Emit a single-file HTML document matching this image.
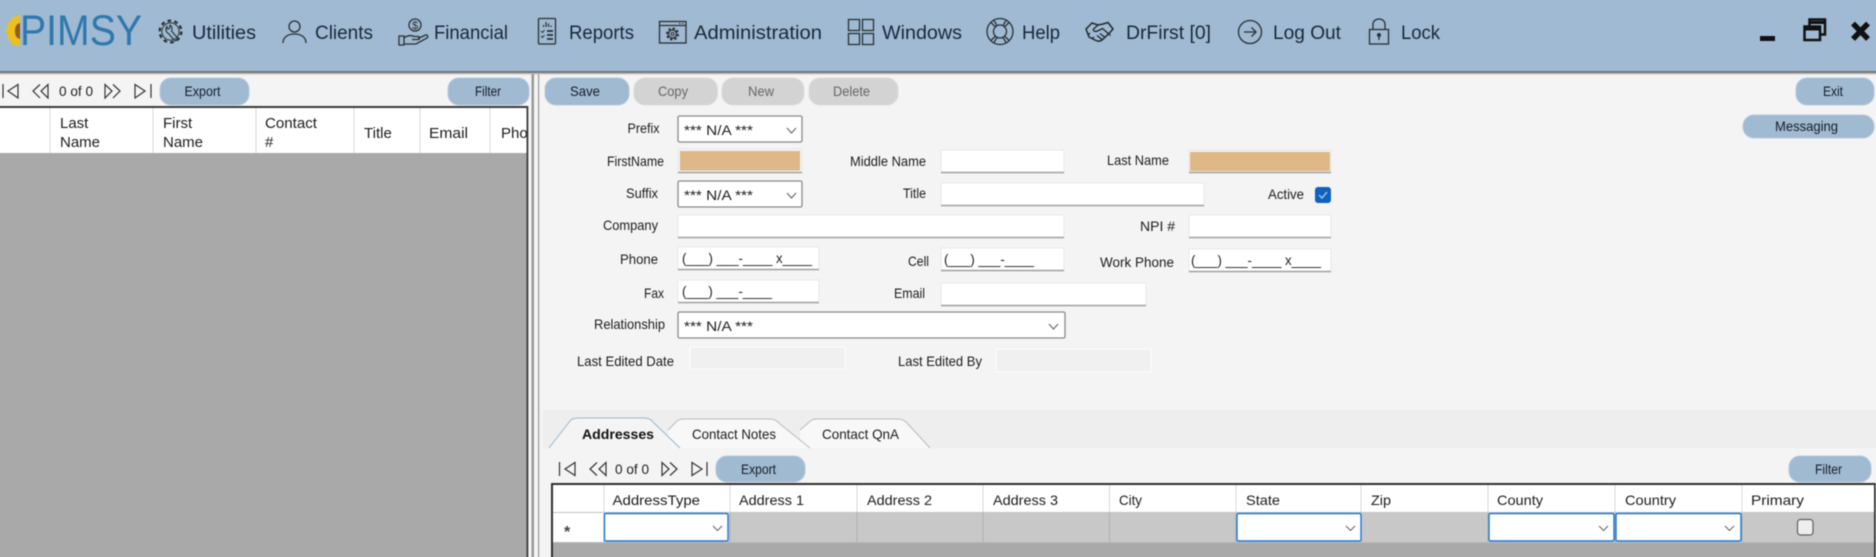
<!DOCTYPE html>
<html><head><meta charset="utf-8"><title>PIMSY</title>
<style>
html,body{margin:0;padding:0;background:#f4f4f4;width:1876px;height:557px;overflow:hidden}
svg{display:block;margin:-10px 0 0 -10px;filter:blur(.45px)}
text{font-family:"Liberation Sans",sans-serif;fill:#1c1c1c;font-size:14px}
.m{font-size:19px;fill:#1a2838}
.b{font-size:14px;fill:#151d28}
.d{font-size:14px;fill:#666}
.h{font-size:15px;fill:#1c1c1c}
.i{fill:none;stroke:#2b2f33;stroke-width:1.3}
.n{fill:none;stroke:#333;stroke-width:1.2}
.btn{fill:#a0bad2;stroke:#b4c8dc;stroke-width:1}
.dis{fill:#d3d3d3;stroke:#dcdcdc;stroke-width:1}
.f{fill:#fff;stroke:#e9e9e9;stroke-width:1}
.u{stroke:#a2a2a2;stroke-width:1.5}
.s{fill:#fff;stroke:#8a8a8a;stroke-width:1.3}
.c{fill:none;stroke:#666;stroke-width:1.1}
.e{fill:#f0f0f0;stroke:#fafafa;stroke-width:1.5}
.g{stroke:#d8d8d8;stroke-width:1}
.k{fill:#fff;stroke:#1e78d2;stroke-width:1.4}
.r{stroke:#b0b0b0;stroke-width:1}
</style></head><body>
<svg xmlns="http://www.w3.org/2000/svg" width="1896" height="577" viewBox="-10 -10 1896 577">
<defs><clipPath id="ph"><rect x="490" y="108" width="36.5" height="45"/></clipPath></defs>
<rect x="-10" y="-10" width="1896" height="577" fill="#f4f4f4"/>
<!-- top bar -->
<rect x="-10" y="-10" width="1896" height="81" fill="#9fbad2"/>
<rect x="-10" y="71" width="1896" height="2" fill="#777"/>
<rect x="-10" y="73" width="1896" height="1.5" fill="#c4c4c4"/>
<!-- logo -->
<path d="M20 14 L16 17 L12 17 L11 21 L7 23 L8 27 L5 31 L8 35 L7 39 L11 41 L12 45 L16 45 L20 47 Z" fill="#ecc01f"/>
<path d="M20 23 C16 24 15 27 15 31 C15 35 16 38 20 39 Z" fill="#8f5f22"/>
<text x="20" y="45" textLength="122" lengthAdjust="spacingAndGlyphs" style="font-size:43px;fill:#2f78ad">PIMSY</text>
<!-- menu labels -->
<text class="m" x="192" y="39" textLength="64" lengthAdjust="spacingAndGlyphs">Utilities</text>
<text class="m" x="315" y="39" textLength="58" lengthAdjust="spacingAndGlyphs">Clients</text>
<text class="m" x="434" y="39" textLength="74" lengthAdjust="spacingAndGlyphs">Financial</text>
<text class="m" x="569" y="39" textLength="65" lengthAdjust="spacingAndGlyphs">Reports</text>
<text class="m" x="694" y="39" textLength="128" lengthAdjust="spacingAndGlyphs">Administration</text>
<text class="m" x="882" y="39" textLength="80" lengthAdjust="spacingAndGlyphs">Windows</text>
<text class="m" x="1022" y="39" textLength="38" lengthAdjust="spacingAndGlyphs">Help</text>
<text class="m" x="1126" y="39" textLength="85" lengthAdjust="spacingAndGlyphs">DrFirst [0]</text>
<text class="m" x="1273" y="39" textLength="68" lengthAdjust="spacingAndGlyphs">Log Out</text>
<text class="m" x="1401" y="39" textLength="39" lengthAdjust="spacingAndGlyphs">Lock</text>
<!-- utilities gear -->
<circle cx="170.5" cy="31.5" r="8.6" fill="none" stroke="#2b2f33" stroke-width="1"/>
<circle cx="170.5" cy="31.5" r="10.8" fill="none" stroke="#2b2f33" stroke-width="2.4" stroke-dasharray="3.6 3.2"/>
<path fill="none" stroke="#2b2f33" stroke-width="1.1" d="M167 26.500a4.500 4.500 0 0 0 1.500 7l6.500 7.500 3-2.500-6.500-7.500a4.500 4.500 0 0 0-1.500-6l-.5 3.500-2 .5z"/>
<!-- clients -->
<circle class="i" cx="294.5" cy="26.5" r="5.5"/>
<path class="i" d="M283 43c0-6 5-9 11.500-9s11.500 3 11.500 9"/>
<!-- financial -->
<circle class="i" cx="415" cy="25" r="6"/>
<text x="412" y="29" style="font-size:11px;fill:#2b2f33">$</text>
<path class="i" d="M399 36h5v9h-5zM404 38c4-3 7-3 10-1.500h4c2 0 2 3 0 3h-6M418 38.500l7.500-3.500c2-.5 3 1.500 1.500 3l-11 6h-12"/>
<!-- reports -->
<rect class="i" x="538.500" y="18.500" width="17" height="25.500" rx="1"/>
<path d="M543.500 27v-2M546 27v-5M548.500 27v-3.500M551 27v-1.500" stroke="#2b2f33" stroke-width="1.200"/>
<path d="M547 31h6M547 35h6M547 39h6" stroke="#2b2f33" stroke-width="1.800"/>
<path d="M541 31l1.500 1.500 2-2.500M541 36l1.500 1.500 2-2.500" fill="none" stroke="#2b2f33" stroke-width="1"/>
<!-- admin -->
<rect class="i" x="659.500" y="21.500" width="26.500" height="21.500"/>
<path d="M659.500 25.500h26.500" stroke="#2b2f33" stroke-width="1.200"/>
<path d="M679 23.500h1.500M682 23.500h1.500" stroke="#2b2f33" stroke-width="1"/>
<circle class="i" cx="672.500" cy="34" r="4"/>
<circle cx="672.500" cy="34" r="5.500" fill="none" stroke="#2b2f33" stroke-width="2" stroke-dasharray="2.400 1.900"/>
<circle cx="672.500" cy="34" r="1.500" fill="none" stroke="#2b2f33"/>
<!-- windows -->
<rect class="i" x="848.500" y="19.500" width="11" height="11"/>
<rect class="i" x="862.500" y="19.500" width="11" height="11"/>
<rect class="i" x="848.500" y="33.500" width="11" height="11"/>
<rect class="i" x="862.500" y="33.500" width="11" height="11"/>
<!-- help -->
<circle class="i" cx="1000" cy="31.500" r="13"/>
<circle class="i" cx="1000" cy="31.500" r="6.500"/>
<path class="i" d="M991 22.500l4.500 4.500M1009 22.500l-4.500 4.500M991 40.500l4.500-4.500M1009 40.500l-4.500-4.500M994 20.500l3 5M1006 20.500l-3 5M994 42.500l3-5M1006 42.500l-3-5"/>
<!-- handshake -->
<path fill="none" stroke="#23272b" stroke-width="1.500" d="M1086 29l6-6 6 2 5-1 5-1.500 5 6.500-3 3.500-8 7.500c-2 1.500-4 1.500-6 .5l-7-3.500-3-8z"/>
<path fill="none" stroke="#23272b" stroke-width="1.300" d="M1098 25l-4.500 4c-1 2 2 3 4 2l5-2.500 8 7M1102 39.500l-5-4M1105 37.500l-5-4M1090 33l-2 2M1094 37l-2 2"/>
<!-- logout -->
<circle class="i" cx="1250" cy="32" r="11.500"/>
<path class="i" d="M1244 32h12M1251.500 27.500l4.500 4.500-4.500 4.500"/>
<!-- lock -->
<rect class="i" x="1369.500" y="29.500" width="19" height="14.500"/>
<path class="i" d="M1373 29v-5a6 5 0 0 1 12 0v5"/>
<circle cx="1379" cy="35" r="2" fill="#2b2f33"/><path d="M1379 35v5" stroke="#2b2f33" stroke-width="1.300"/>
<!-- window controls -->
<rect x="1760" y="36" width="15" height="5" fill="#111"/>
<rect x="1809.500" y="19.500" width="15.500" height="15" fill="none" stroke="#111" stroke-width="2.500"/>
<path d="M1809 22.500h16" stroke="#111" stroke-width="3"/>
<rect x="1804.500" y="26.500" width="15.500" height="13.500" fill="#9fbad2" stroke="#111" stroke-width="2.500"/>
<path d="M1804 29h16" stroke="#111" stroke-width="3"/>
<path d="M1853 23.500l15 15.500M1868 23.500l-15 15.500" stroke="#111" stroke-width="5.500"/>

<!-- left toolbar -->
<path class="n" d="M3 84v14M18 84.500v13.500l-10-7z"/>
<path class="n" d="M40 84.500l-7 6.500 7 7M48 84.500v13.500l-7-7z"/>
<text x="59" y="96" textLength="34" lengthAdjust="spacingAndGlyphs">0 of 0</text>
<path class="n" d="M105 84.500v13.500l7-7zM113 84.500l7 6.500-7 7"/>
<path class="n" d="M135 84.500v13.500l10-7zM151 84v14"/>
<rect class="btn" x="160" y="78" width="89" height="27" rx="11"/>
<text class="b" x="184.500" y="96" textLength="36" lengthAdjust="spacingAndGlyphs">Export</text>
<rect class="btn" x="448" y="78" width="81" height="27" rx="11"/>
<text class="b" x="475" y="96" textLength="26" lengthAdjust="spacingAndGlyphs">Filter</text>
<!-- left grid -->
<rect x="-10" y="106" width="538" height="461" fill="#a9a9a9"/>
<rect x="-10" y="108" width="536.500" height="45" fill="#fff"/>
<rect x="-10" y="106" width="538" height="2" fill="#3a3a3a"/>
<rect x="526.500" y="106" width="1.800" height="461" fill="#3a3a3a"/>
<path class="g" d="M50 108v45M153 108v45M256 108v45M354 108v45M420 108v45M490 108v45"/>
<text class="h" x="60" y="128">Last</text><text class="h" x="60" y="147">Name</text>
<text class="h" x="163" y="128">First</text><text class="h" x="163" y="147">Name</text>
<text class="h" x="265" y="128" textLength="52" lengthAdjust="spacingAndGlyphs">Contact</text><text class="h" x="265" y="147">#</text>
<text class="h" x="364" y="138">Title</text>
<text class="h" x="429" y="138" textLength="39" lengthAdjust="spacingAndGlyphs">Email</text>
<g clip-path="url(#ph)"><text class="h" x="501" y="138">Phone</text></g>
<!-- splitter -->
<rect x="531.500" y="74" width="2.500" height="493" fill="#999"/>
<rect x="538" y="74" width="1.200" height="493" fill="#999"/>
<!-- right toolbar -->
<rect class="btn" x="545" y="78" width="84" height="27" rx="11"/>
<text class="b" x="570" y="96" textLength="30" lengthAdjust="spacingAndGlyphs">Save</text>
<rect class="dis" x="634" y="78" width="83.500" height="27" rx="11"/>
<text class="d" x="658" y="96" textLength="30" lengthAdjust="spacingAndGlyphs">Copy</text>
<rect class="dis" x="722" y="78" width="82" height="27" rx="11"/>
<text class="d" x="748" y="96" textLength="26" lengthAdjust="spacingAndGlyphs">New</text>
<rect class="dis" x="809" y="78" width="89" height="27" rx="11"/>
<text class="d" x="833" y="96" textLength="37" lengthAdjust="spacingAndGlyphs">Delete</text>
<rect class="btn" x="1796" y="78" width="78" height="27" rx="11"/>
<text class="b" x="1823" y="96" textLength="20" lengthAdjust="spacingAndGlyphs">Exit</text>
<rect class="btn" x="1743" y="115" width="131" height="23" rx="11"/>
<text class="b" x="1775" y="131" textLength="63" lengthAdjust="spacingAndGlyphs">Messaging</text>
<!-- form labels -->
<text x="627.500" y="133" textLength="32" lengthAdjust="spacingAndGlyphs">Prefix</text>
<text x="607" y="166" textLength="57" lengthAdjust="spacingAndGlyphs">FirstName</text>
<text x="850" y="166" textLength="76" lengthAdjust="spacingAndGlyphs">Middle Name</text>
<text x="1107" y="165" textLength="62" lengthAdjust="spacingAndGlyphs">Last Name</text>
<text x="626" y="198" textLength="32" lengthAdjust="spacingAndGlyphs">Suffix</text>
<text x="903" y="198" textLength="23" lengthAdjust="spacingAndGlyphs">Title</text>
<text x="1268" y="199" textLength="36" lengthAdjust="spacingAndGlyphs">Active</text>
<text x="603" y="230" textLength="55" lengthAdjust="spacingAndGlyphs">Company</text>
<text x="1140" y="231" textLength="35" lengthAdjust="spacingAndGlyphs">NPI #</text>
<text x="620" y="264" textLength="38" lengthAdjust="spacingAndGlyphs">Phone</text>
<text x="908" y="266" textLength="21" lengthAdjust="spacingAndGlyphs">Cell</text>
<text x="1100" y="267" textLength="74" lengthAdjust="spacingAndGlyphs">Work Phone</text>
<text x="644" y="298" textLength="20" lengthAdjust="spacingAndGlyphs">Fax</text>
<text x="894" y="298" textLength="31" lengthAdjust="spacingAndGlyphs">Email</text>
<text x="594" y="329" textLength="71" lengthAdjust="spacingAndGlyphs">Relationship</text>
<text x="577" y="366" textLength="97" lengthAdjust="spacingAndGlyphs">Last Edited Date</text>
<text x="898" y="366" textLength="84" lengthAdjust="spacingAndGlyphs">Last Edited By</text>
<!-- selects -->
<rect class="s" x="678" y="116" width="124" height="26" rx="1.500"/>
<text x="684" y="135" textLength="69" lengthAdjust="spacingAndGlyphs">*** N/A ***</text>
<path class="c" d="M787 128l4.500 5 4.500-5"/>
<rect class="s" x="678" y="181" width="124" height="26" rx="1.500"/>
<text x="684" y="200" textLength="69" lengthAdjust="spacingAndGlyphs">*** N/A ***</text>
<path class="c" d="M787 193l4.500 5 4.500-5"/>
<rect class="s" x="678" y="312" width="387" height="26" rx="1.500"/>
<text x="684" y="331" textLength="69" lengthAdjust="spacingAndGlyphs">*** N/A ***</text>
<path class="c" d="M1049 324l4.500 5 4.500-5"/>
<!-- fields -->
<rect class="f" x="678" y="149" width="124" height="24" style="fill:#f2f2f2"/>
<rect x="680" y="151" width="120" height="19.500" fill="#deb887"/>
<path class="u" d="M678 172.500h124"/>
<rect class="f" x="941" y="150" width="123" height="23"/><path class="u" d="M941 172.500h123"/>
<rect class="f" x="1189" y="150" width="142" height="23" style="fill:#f2f2f2"/>
<rect x="1190" y="152" width="140" height="19" fill="#deb887"/>
<path class="u" d="M1189 172.500h142"/>
<rect class="f" x="941" y="183" width="263" height="23"/><path class="u" d="M941 205.500h263"/>
<rect x="1315" y="187" width="16" height="16" rx="3" fill="#0f62be"/>
<path d="M1319 195l3 3 5-6" fill="none" stroke="#bcd6f2" stroke-width="1.200"/>
<rect class="f" x="678" y="215" width="386" height="23"/><path class="u" d="M678 237.500h386"/>
<rect class="f" x="1189" y="215" width="142" height="23"/><path class="u" d="M1189 237.500h142"/>
<rect class="f" x="678" y="247" width="141" height="23"/><path class="u" d="M678 269.500h141"/>
<text x="682" y="263" textLength="130" lengthAdjust="spacingAndGlyphs">(___) ___-____ x____</text>
<rect class="f" x="941" y="248" width="123" height="23"/><path class="u" d="M941 270.500h123"/>
<text x="944" y="264" textLength="90" lengthAdjust="spacingAndGlyphs">(___) ___-____</text>
<rect class="f" x="1189" y="249" width="142" height="23"/><path class="u" d="M1189 271.500h142"/>
<text x="1191" y="265" textLength="130" lengthAdjust="spacingAndGlyphs">(___) ___-____ x____</text>
<rect class="f" x="678" y="280" width="141" height="23"/><path class="u" d="M678 302.500h141"/>
<text x="682" y="296" textLength="90" lengthAdjust="spacingAndGlyphs">(___) ___-____</text>
<rect class="f" x="941" y="283" width="205" height="23"/><path class="u" d="M941 305.500h205"/>
<rect class="e" x="690" y="347" width="155" height="22"/>
<rect class="e" x="996" y="349" width="155" height="23"/>
<!-- tab area -->
<rect x="543" y="410" width="1343" height="38" fill="#eeeeee"/>
<rect x="543" y="448" width="1343" height="119" fill="#f4f4f4"/>
<path d="M800 430 811 420.500Q813 419 818 419H898Q904 419 908 424L930 448H800Z" fill="#f8f8f8"/>
<path d="M800 430 811 420.500Q813 419 818 419H898Q904 419 908 424L930 448" fill="none" stroke="#bbb"/>
<path d="M668 430 677 421Q679 419 684 419H770Q776 419 780 424L810 448H668Z" fill="#f8f8f8"/>
<path d="M668 430 677 421Q679 419 684 419H770Q776 419 780 424L810 448" fill="none" stroke="#bbb"/>
<path d="M549 448 570 421Q572 418 578 418H644Q650 418 653 422L680 448Z" fill="#f4f4f4"/>
<path d="M549 448 570 421Q572 418 578 418H644Q650 418 653 422L680 448" fill="none" stroke="#9bb6cf"/>
<text x="582" y="439" textLength="72" lengthAdjust="spacingAndGlyphs" style="font-weight:bold;fill:#111">Addresses</text>
<text x="692" y="439" textLength="84" lengthAdjust="spacingAndGlyphs">Contact Notes</text>
<text x="822" y="439" textLength="77" lengthAdjust="spacingAndGlyphs">Contact QnA</text>
<!-- sub toolbar -->
<path class="n" d="M559.500 462v14M575 462.500v13l-10-6.500z"/>
<path class="n" d="M597 462.500l-7 6.500 7 6.500M606 462.500v13l-7-6.500z"/>
<text x="615" y="474" textLength="34" lengthAdjust="spacingAndGlyphs">0 of 0</text>
<path class="n" d="M662 462.500v13l7-6.500zM670 462.500l7 6.500-7 6.500"/>
<path class="n" d="M692 462.500v13l10-6.500zM707 462v14"/>
<rect class="btn" x="716" y="456" width="89" height="26" rx="11"/>
<text class="b" x="741" y="474" textLength="35" lengthAdjust="spacingAndGlyphs">Export</text>
<rect class="btn" x="1789" y="456" width="82" height="26" rx="11"/>
<text class="b" x="1815" y="474" textLength="27" lengthAdjust="spacingAndGlyphs">Filter</text>
<!-- bottom grid -->
<rect x="551" y="483" width="1324.500" height="84" fill="#a9a9a9"/>
<rect x="553" y="485" width="1321" height="27.500" fill="#fff"/>
<rect x="604" y="513" width="1270" height="29.500" fill="#c8c8c8"/>
<rect x="553" y="513" width="51" height="29.500" fill="#fff"/>
<rect x="551" y="483" width="1324.500" height="2" fill="#2f2f2f"/>
<rect x="551" y="483" width="2" height="84" fill="#2f2f2f"/>
<rect x="1874" y="483" width="1.800" height="84" fill="#2f2f2f"/>
<path class="g" d="M604 485v27M730 485v27M857 485v27M983 485v27M1109.500 485v27M1236 485v27M1361 485v27M1488 485v27M1615 485v27M1742 485v27"/>
<path d="M553 512.500h1321" stroke="#c4c4c4"/>
<path d="M553 542.500h1321" stroke="#b8b8b8"/>
<path class="r" d="M604 513v29M730 513v29M857 513v29M983 513v29M1109.500 513v29M1236 513v29M1361 513v29M1488 513v29M1615 513v29M1742 513v29"/>
<text x="612.500" y="505" textLength="87.500" lengthAdjust="spacingAndGlyphs">AddressType</text>
<text x="739" y="505" textLength="65" lengthAdjust="spacingAndGlyphs">Address 1</text>
<text x="867" y="505" textLength="65" lengthAdjust="spacingAndGlyphs">Address 2</text>
<text x="993" y="505" textLength="65" lengthAdjust="spacingAndGlyphs">Address 3</text>
<text x="1119" y="505" textLength="23" lengthAdjust="spacingAndGlyphs">City</text>
<text x="1246" y="505" textLength="34" lengthAdjust="spacingAndGlyphs">State</text>
<text x="1371" y="505" textLength="20" lengthAdjust="spacingAndGlyphs">Zip</text>
<text x="1497" y="505" textLength="46" lengthAdjust="spacingAndGlyphs">County</text>
<text x="1625" y="505" textLength="51" lengthAdjust="spacingAndGlyphs">Country</text>
<text x="1751" y="505" textLength="53" lengthAdjust="spacingAndGlyphs">Primary</text>
<text x="564" y="537" style="font-size:16px;font-weight:bold;fill:#444">*</text>
<rect class="k" x="604.500" y="513.500" width="123.500" height="27.500" rx="1.500"/>
<path class="c" d="M713 526l4.500 4.500 4.500-4.500"/>
<rect class="k" x="1237" y="513.500" width="124" height="27.500" rx="1.500"/>
<path class="c" d="M1346 526l4.500 4.500 4.500-4.500"/>
<rect class="k" x="1489" y="513.500" width="125" height="27.500" rx="1.500"/>
<path class="c" d="M1599 526l4.500 4.500 4.500-4.500"/>
<rect class="k" x="1616" y="513.500" width="125" height="27.500" rx="1.500"/>
<path class="c" d="M1725 526l4.500 4.500 4.500-4.500"/>
<rect x="1797.500" y="519.500" width="15.500" height="15.500" rx="3" fill="#eeeeee" stroke="#5f5f5f" stroke-width="1.200"/>
</svg>
</body></html>
